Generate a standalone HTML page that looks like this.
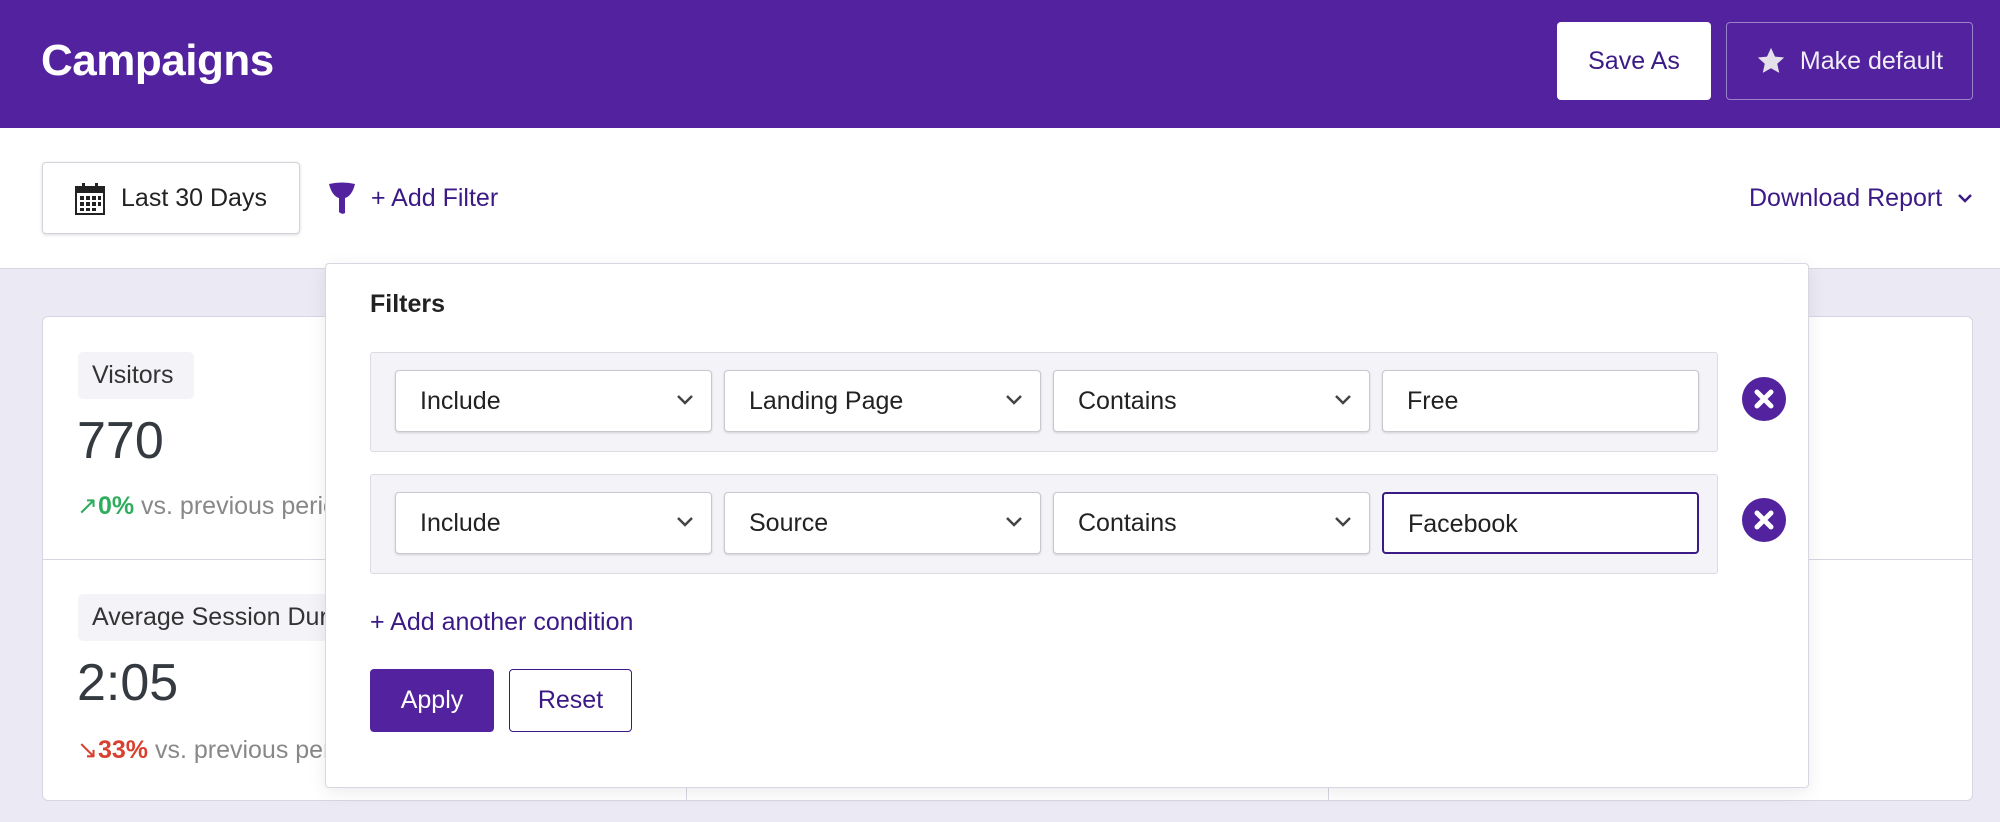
<!DOCTYPE html>
<html><head><meta charset="utf-8"><style>
*{box-sizing:border-box;margin:0;padding:0}
body{width:2000px;height:822px;overflow:hidden;background:#ebe9f3;font-family:"Liberation Sans",Arial,sans-serif;position:relative;color:#222}
.abs{position:absolute}
.hdr{left:0;top:0;width:2000px;height:128px;background:#52229f}
.title{left:41px;top:36px;color:#fff;font-size:44px;font-weight:bold;letter-spacing:-0.5px}
.btn{display:flex;align-items:center;justify-content:center;font-size:25px;border-radius:4px}
.tool{left:0;top:128px;width:2000px;height:141px;background:#fff;border-bottom:1px solid #d8d6e0}
.card{left:42px;top:316px;width:1931px;height:485px;background:#fff;border:1px solid #d8d6e2;border-radius:6px}
.pill{background:#f4f3f8;border-radius:5px;font-size:25px;color:#333;padding:0 20px 0 14px;height:47px;line-height:47px}
.big{font-size:52px;color:#343a40}
.panel{left:325px;top:263px;width:1484px;height:525px;background:#fff;border:1px solid #d8d6e0;border-radius:4px;box-shadow:0 4px 18px rgba(0,0,0,.08);z-index:5}
.row{position:absolute;left:44px;width:1348px;height:100px;background:#f4f3f8;border:1px solid #dcdae2;border-radius:3px}
.sel{position:absolute;top:17px;width:317px;height:62px;background:#fff;border:1px solid #c9c8cf;border-radius:4px;box-shadow:0 1px 2px rgba(0,0,0,.15);font-size:25px;line-height:60px;padding-left:24px;color:#222}
.sel svg{position:absolute;right:16px;top:22px}
.x{position:absolute;left:1416px;width:44px;height:44px;border-radius:50%;background:#52229f}
</style></head><body>
<div class="abs hdr"></div>
<div class="abs title">Campaigns</div>
<div class="abs btn" style="left:1557px;top:22px;width:154px;height:78px;background:#fff;color:#3b1a86">Save As</div>
<div class="abs btn" style="left:1726px;top:22px;width:247px;height:78px;border:1.5px solid #9a82cc;color:#f0eef6">
<svg width="30" height="30" viewBox="0 0 24 24" style="margin-right:14px"><path d="M12 1.5l3.2 7 7.3.7-5.5 5 1.6 7.3L12 17.8 5.4 21.5 7 14.2 1.5 9.2l7.3-.7z" fill="#e4e1ea"/></svg>Make default</div>
<div class="abs tool"></div>
<div class="abs btn" style="left:42px;top:162px;width:258px;height:72px;background:#fff;border:1px solid #d4d2da;box-shadow:0 1px 3px rgba(0,0,0,.15);color:#222">
<svg width="30" height="33" viewBox="0 0 30 33" style="margin-right:16px"><rect x="1" y="5" width="28" height="27" fill="none" stroke="#222" stroke-width="2"/><rect x="1" y="5" width="28" height="6" fill="#222"/><rect x="7" y="1" width="3" height="7" fill="#222"/><rect x="20" y="1" width="3" height="7" fill="#222"/><g fill="#222"><rect x="5" y="14" width="4" height="4"/><rect x="11" y="14" width="4" height="4"/><rect x="17" y="14" width="4" height="4"/><rect x="23" y="14" width="3" height="4"/><rect x="5" y="20" width="4" height="4"/><rect x="11" y="20" width="4" height="4"/><rect x="17" y="20" width="4" height="4"/><rect x="23" y="20" width="3" height="4"/><rect x="5" y="26" width="4" height="3"/><rect x="11" y="26" width="4" height="3"/><rect x="17" y="26" width="4" height="3"/></g></svg>Last 30 Days</div>
<svg class="abs" style="left:328px;top:182px" width="28" height="32" viewBox="0 0 28 32"><path d="M1 2Q14 -1 27 2Q24 14 17 16V31Q14 33 11 30V16Q4 14 1 2z" fill="#52229f"/></svg>
<div class="abs" style="left:371px;top:184px;font-size:25px;color:#3b1a86">+ Add Filter</div>
<div class="abs" style="left:1749px;top:184px;font-size:25px;color:#3b1a86">Download Report</div>
<svg class="abs" style="left:1957px;top:192px" width="16" height="12" viewBox="0 0 16 12"><path d="M2 3l6 6 6-6" fill="none" stroke="#3b1a86" stroke-width="2.5"/></svg>

<div class="abs card">
<div class="abs" style="left:0;top:242px;width:1929px;height:1px;background:#d8d6e2"></div>
<div class="abs" style="left:643px;top:242px;width:1px;height:241px;background:#d8d6e2"></div>
<div class="abs" style="left:1285px;top:242px;width:1px;height:241px;background:#d8d6e2"></div>
<div class="abs pill" style="left:35px;top:35px">Visitors</div>
<div class="abs big" style="left:34px;top:94px">770</div>
<div class="abs" style="left:34px;top:174px;font-size:25px;color:#888;white-space:nowrap"><span style="color:#2fad5f;font-weight:bold"><span style="font-weight:normal">↗</span>0%</span> vs. previous period</div>
<div class="abs pill" style="left:35px;top:277px;white-space:nowrap">Average Session Duration</div>
<div class="abs big" style="left:34px;top:336px">2:05</div>
<div class="abs" style="left:34px;top:418px;font-size:25px;color:#888;white-space:nowrap"><span style="color:#d8412f;font-weight:bold"><span style="font-weight:normal">↘</span>33%</span> vs. previous period</div>
</div>

<div class="abs panel">
<div class="abs" style="left:44px;top:26px;font-size:25px;font-weight:bold;color:#222">Filters</div>
<div class="row" style="top:88px">
<div class="sel" style="left:24px">Include<svg width="20" height="14" viewBox="0 0 20 14"><path d="M3 3l7 7 7-7" fill="none" stroke="#444" stroke-width="2.5"/></svg></div>
<div class="sel" style="left:353px">Landing Page<svg width="20" height="14" viewBox="0 0 20 14"><path d="M3 3l7 7 7-7" fill="none" stroke="#444" stroke-width="2.5"/></svg></div>
<div class="sel" style="left:682px">Contains<svg width="20" height="14" viewBox="0 0 20 14"><path d="M3 3l7 7 7-7" fill="none" stroke="#444" stroke-width="2.5"/></svg></div>
<div class="sel" style="left:1011px">Free</div>
</div>
<div class="row" style="top:210px">
<div class="sel" style="left:24px">Include<svg width="20" height="14" viewBox="0 0 20 14"><path d="M3 3l7 7 7-7" fill="none" stroke="#444" stroke-width="2.5"/></svg></div>
<div class="sel" style="left:353px">Source<svg width="20" height="14" viewBox="0 0 20 14"><path d="M3 3l7 7 7-7" fill="none" stroke="#444" stroke-width="2.5"/></svg></div>
<div class="sel" style="left:682px">Contains<svg width="20" height="14" viewBox="0 0 20 14"><path d="M3 3l7 7 7-7" fill="none" stroke="#444" stroke-width="2.5"/></svg></div>
<div class="sel" style="left:1011px;border:2px solid #3b1a86;box-shadow:none">Facebook</div>
</div>
<div class="x" style="top:113px"><svg width="44" height="44" viewBox="0 0 44 44"><path d="M15 15l14 14M29 15L15 29" stroke="#fff" stroke-width="5" stroke-linecap="round"/></svg></div>
<div class="x" style="top:234px"><svg width="44" height="44" viewBox="0 0 44 44"><path d="M15 15l14 14M29 15L15 29" stroke="#fff" stroke-width="5" stroke-linecap="round"/></svg></div>
<div class="abs" style="left:44px;top:344px;font-size:25px;color:#3b1a86">+ Add another condition</div>
<div class="abs btn" style="left:44px;top:405px;width:124px;height:63px;background:#52229f;color:#fff">Apply</div>
<div class="abs btn" style="left:183px;top:405px;width:123px;height:63px;background:#fff;border:1.5px solid #3b1a86;color:#3b1a86">Reset</div>
</div>
</body></html>
